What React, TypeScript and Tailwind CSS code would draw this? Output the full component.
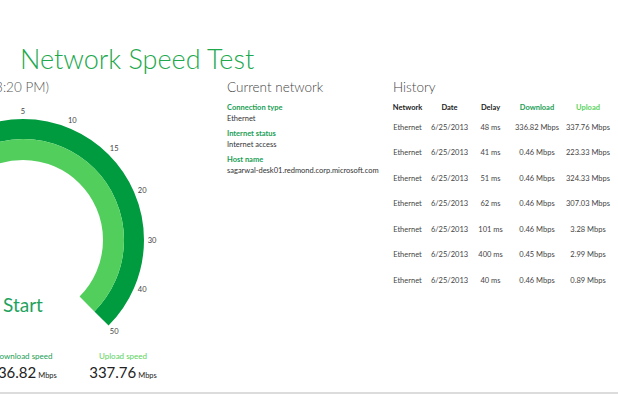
const history = [
  { delay: "48 ms", down: "336.82 Mbps", up: "337.76 Mbps" },
  { delay: "41 ms", down: "0.46 Mbps", up: "223.33 Mbps" },
  { delay: "51 ms", down: "0.46 Mbps", up: "324.33 Mbps" },
  { delay: "62 ms", down: "0.46 Mbps", up: "307.03 Mbps" },
  { delay: "101 ms", down: "0.46 Mbps", up: "3.28 Mbps" },
  { delay: "400 ms", down: "0.45 Mbps", up: "2.99 Mbps" },
  { delay: "40 ms", down: "0.46 Mbps", up: "0.89 Mbps" },
];

const ticks = [
  { label: "0", deg: -45 },
  { label: "1", deg: -22.5 },
  { label: "5", deg: 0 },
  { label: "10", deg: 22.5 },
  { label: "15", deg: 45 },
  { label: "20", deg: 67.5 },
  { label: "30", deg: 90 },
  { label: "40", deg: 112.5 },
  { label: "50", deg: 135 },
];

const CX = 23;
const CY = 240;

// clock angle: 0 = top, clockwise
function pt(r: number, deg: number) {
  const a = (deg * Math.PI) / 180;
  return [CX + r * Math.sin(a), CY - r * Math.cos(a)];
}

function arc(r: number, from: number, to: number) {
  const [x1, y1] = pt(r, from);
  const [x2, y2] = pt(r, to);
  const large = to - from > 180 ? 1 : 0;
  return `M ${x1} ${y1} A ${r} ${r} 0 ${large} 1 ${x2} ${y2}`;
}

function Gauge() {
  return (
    <div className="relative h-[240px] w-[180px]">
      <svg width="180" height="240" viewBox="0 100 180 240" className="overflow-visible">
        <path d={arc(111, -135, 135)} fill="none" stroke="#009b3f" strokeWidth="20" />
        <path d={arc(90.5, -135, 135)} fill="none" stroke="#52ce5c" strokeWidth="21" />
        {ticks.map((t) => {
          const [x, y] = pt(129, t.deg);
          return (
            <text
              key={t.label}
              x={x}
              y={y}
              textAnchor="middle"
              dominantBaseline="central"
              fontSize="7.5"
              fill="#444"
              fontFamily="Lato, sans-serif"
            >
              {t.label}
            </text>
          );
        })}
      </svg>
      <button className="absolute left-[3px] top-[193px] text-[19px] leading-[24px] text-[#1fa25e]">
        Start
      </button>
    </div>
  );
}

function Speed({ label, value, color }: { label: string; value: string; color: string }) {
  return (
    <div className="flex w-[100px] flex-col items-center">
      <div className={`whitespace-nowrap text-[8px] leading-[11px] ${color}`}>{label}</div>
      <div className="flex items-baseline whitespace-nowrap text-[#222]">
        <span className="text-[15px] leading-[20px]">{value}</span>
        <span className="ml-[2px] text-[7.5px]">Mbps</span>
      </div>
    </div>
  );
}

export default function App() {
  return (
    <div className="relative h-[394px] w-[618px] overflow-hidden border-b-2 border-[#dcdcdc] bg-white font-['Lato',sans-serif] text-[#333]">
      <h1 className="pl-[20px] pt-[40px] text-[27px] font-light leading-[38px] text-[#20a84c]">
        Network Speed Test
      </h1>

      <div className="flex">
        <div className="w-[227px]">
          <div className="flex w-[49px] justify-end whitespace-nowrap text-[13.5px] font-light leading-[18px] text-[#555]">
            Last test (6/25/2013 3:20 PM)
          </div>
          <div className="mt-[4px]">
            <Gauge />
          </div>
          <div className="-ml-[27px] mt-[11px] flex">
            <Speed label="Download speed" value="336.82" color="text-[#1a9e55]" />
            <Speed label="Upload speed" value="337.76" color="text-[#5bd35e]" />
          </div>
        </div>

        <div className="w-[166px]">
          <div className="text-[13.5px] font-light leading-[18px] text-[#444]">Current network</div>
          <div className="mt-[5.75px] flex flex-col gap-[3px] text-[7.5px] leading-[11.5px]">
            <div>
              <div className="font-bold text-[#1a9e55]">Connection type</div>
              <div>Ethernet</div>
            </div>
            <div>
              <div className="font-bold text-[#1a9e55]">Internet status</div>
              <div>Internet access</div>
            </div>
            <div>
              <div className="font-bold text-[#1a9e55]">Host name</div>
              <div className="whitespace-nowrap">sagarwal-desk01.redmond.corp.microsoft.com</div>
            </div>
          </div>
        </div>

        <div className="w-[225px]">
          <div className="text-[13.5px] font-light leading-[18px] text-[#444]">History</div>
          <div className="mt-[5.5px] grid grid-cols-[29px_55px_27px_66px_36px] text-[7.5px] leading-[11px]">
            <div className="flex justify-center whitespace-nowrap font-bold text-[#222]">Network</div>
            <div className="flex justify-center font-bold text-[#222]">Date</div>
            <div className="flex justify-center font-bold text-[#222]">Delay</div>
            <div className="flex justify-center font-bold text-[#1a9e55]">Download</div>
            <div className="flex justify-center font-bold text-[#5bd35e]">Upload</div>
          </div>
          <div className="mt-[2px]">
            {history.map((h, i) => (
              <div
                key={i}
                className="grid h-[25.5px] grid-cols-[29px_55px_27px_66px_36px] items-center text-[7.5px] text-[#444]"
              >
                <div className="flex justify-center whitespace-nowrap">Ethernet</div>
                <div className="flex justify-center whitespace-nowrap">6/25/2013</div>
                <div className="flex justify-center whitespace-nowrap">{h.delay}</div>
                <div className="flex justify-center whitespace-nowrap">{h.down}</div>
                <div className="flex justify-center whitespace-nowrap">{h.up}</div>
              </div>
            ))}
          </div>
        </div>
      </div>
    </div>
  );
}
